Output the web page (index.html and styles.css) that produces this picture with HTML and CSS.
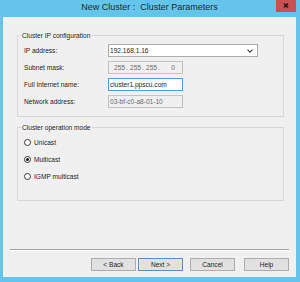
FILE: index.html
```html
<!DOCTYPE html>
<html>
<head>
<meta charset="utf-8">
<link rel="stylesheet" href="styles.css">
</head>
<body>
<div class="window">
  <div class="titlebar">
    <span></span>
    <div class="title">New Cluster :  Cluster Parameters</div>
    <div class="close">
      <svg width="20" height="12" viewBox="0 0 20 12"><path d="M8 3.5 L12 7.5 M12 3.5 L8 7.5" stroke="#1a1a1a" stroke-width="1.6" fill="none"/></svg>
    </div>
  </div>
  <div class="content">
    <div class="group g1">
      <div class="legend">Cluster IP configuration</div>
      <div class="form">
        <div class="label">IP address:</div>
        <div class="field combo wide"><span>192.168.1.16</span><svg class="chev" width="6" height="4" viewBox="0 0 6 4"><path d="M0.5 0.7 L3 3.2 L5.5 0.7" stroke="#444" stroke-width="1.1" fill="none"/></svg></div>
        <div class="label">Subnet mask:</div>
        <div class="field disabled ip"><span class="oct">255</span><span class="dot">.</span><span class="oct">255</span><span class="dot">.</span><span class="oct">255</span><span class="dot">.</span><span class="oct last">0</span></div>
        <div class="label">Full Internet name:</div>
        <div class="field focus">cluster1.ppscu.com</div>
        <div class="label">Network address:</div>
        <div class="field disabled">03-bf-c0-a8-01-10</div>
      </div>
    </div>
    <div class="group g2">
      <div class="legend">Cluster operation mode</div>
      <div class="radios">
        <div class="radio"><span class="circle"></span><span>Unicast</span></div>
        <div class="radio"><span class="circle checked"></span><span>Multicast</span></div>
        <div class="radio"><span class="circle"></span><span>IGMP multicast</span></div>
      </div>
    </div>
    <div class="footer">
      <div class="sep"></div>
      <div class="buttons">
        <div class="btn">&lt; Back</div>
        <div class="btn default next">Next &gt;</div>
        <div class="btn cancel">Cancel</div>
        <div class="btn help">Help</div>
      </div>
    </div>
  </div>
</div>
</body>
</html>
```

FILE: styles.css
```css
html, body {
  margin: 0;
  padding: 0;
}
body {
  width: 300px;
  height: 282px;
  background: #64c4ea;
  font-family: "Liberation Sans", Arial, sans-serif;
  font-size: 6.6px;
  color: #1e1e1e;
  overflow: hidden;
}
.window {
  box-sizing: border-box;
  width: 300px;
  height: 282px;
  padding: 0 4px 5px 3px;
  display: flex;
  flex-direction: column;
}
.titlebar {
  height: 17px;
  flex: none;
  display: grid;
  grid-template-columns: 1fr auto 1fr;
}
.title {
  align-self: center;
  font-size: 9px;
  line-height: 11px;
  margin-top: -2px;
  white-space: pre;
  color: #1d2b33;
}
.close {
  justify-self: end;
  align-self: start;
  width: 20px;
  height: 12px;
  background: #c75050;
}
.close svg {
  display: block;
}
.content {
  flex: 1;
  background: #f0f0f0;
  display: flex;
  flex-direction: column;
  padding-bottom: 6px;
}
.group {
  border: 1px solid #d9d9d9;
  margin: 0 12px 0 14px;
}
.g1 {
  margin-top: 18px;
  padding: 0 0 8px 6px;
}
.g2 {
  margin-top: 10px;
  padding: 0 0 18px 6px;
}
.legend {
  width: fit-content;
  margin: -5px 0 0 -3px;
  padding: 0 1px;
  line-height: 9px;
  background: #f0f0f0;
}
.form {
  margin-top: 4px;
  display: grid;
  grid-template-columns: 84px auto;
  grid-auto-rows: 13px;
  row-gap: 4px;
  justify-items: start;
}
.label {
  align-self: center;
  line-height: 9px;
}
.field {
  box-sizing: border-box;
  width: 75px;
  height: 13px;
  border: 1px solid #acacac;
  background: #fff;
  line-height: 11px;
  padding-left: 1px;
  display: flex;
  align-items: center;
}
.field.wide {
  width: 150px;
}
.combo {
  justify-content: space-between;
  padding-right: 4px;
}
.chev {
  display: block;
}
.field.focus {
  border-color: #569de5;
}
.field.disabled {
  background: #f0f0f0;
  border-color: #c2c2c2;
  color: #6d6d6d;
}
.ip {
  padding-left: 5px;
}
.oct {
  width: 11px;
  text-align: right;
}
.dot {
  width: 5px;
  text-align: center;
}
.oct.last {
  width: 13px;
}
.radios {
  margin-top: 4px;
  display: flex;
  flex-direction: column;
  gap: 5px;
}
.radio {
  height: 12px;
  display: flex;
  align-items: center;
  gap: 3px;
  line-height: 9px;
}
.circle {
  box-sizing: border-box;
  width: 7px;
  height: 7px;
  border: 1px solid #3a3a3a;
  border-radius: 50%;
  background: #fff;
  display: flex;
  align-items: center;
  justify-content: center;
}
.circle.checked::after {
  content: "";
  width: 3px;
  height: 3px;
  border-radius: 50%;
  background: #1a1a1a;
}
.footer {
  margin-top: auto;
}
.sep {
  margin: 0 7px;
  border-top: 1px solid #a6a6a6;
  border-bottom: 1px solid #fff;
}
.buttons {
  margin: 7px 7px 0 0;
  display: flex;
  justify-content: flex-end;
}
.btn {
  box-sizing: border-box;
  width: 45px;
  height: 13px;
  border: 1px solid #adadad;
  background: #e1e1e1;
  line-height: 11px;
  text-align: center;
}
.btn.default {
  border-color: #5b8fc2;
}
.next {
  margin-left: 2px;
}
.cancel {
  margin-left: 7px;
}
.help {
  margin-left: 9px;
}
```
